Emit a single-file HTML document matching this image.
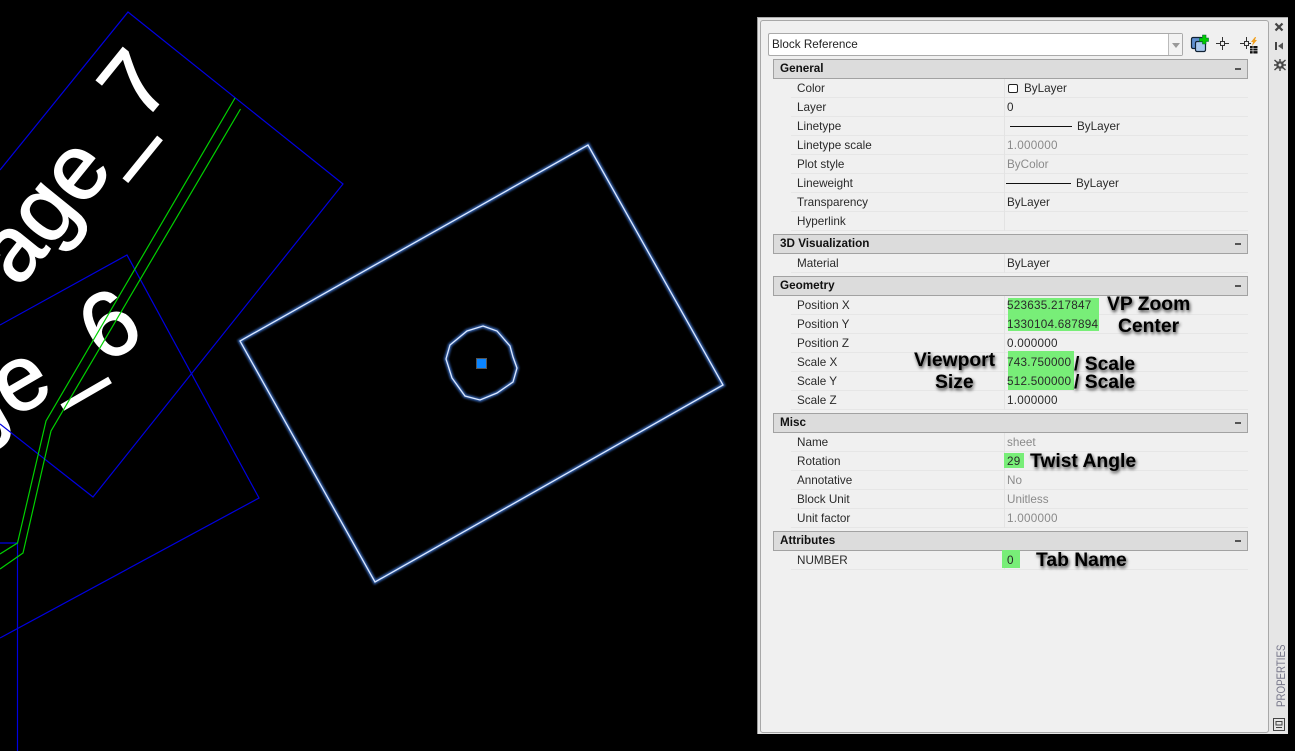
<!DOCTYPE html>
<html><head><meta charset="utf-8">
<style>
html,body{margin:0;padding:0;background:#000;width:1295px;height:751px;overflow:hidden}
body{position:relative;font-family:"Liberation Sans",sans-serif}
svg.d{position:absolute;left:0;top:0}
#p{position:absolute;left:757px;top:17px;width:531px;height:717px;background:#e6e6e6;border-top:1px solid #aaa;border-left:1px solid #999;box-sizing:border-box}
#i{position:absolute;left:760px;top:20px;width:509px;height:713px;background:#f0f0f0;border:1px solid #a8a8a8;border-radius:3px;box-sizing:border-box}
#c{position:absolute;left:768px;top:33px;width:415px;height:23px;background:#fff;border:1px solid #aaa;border-radius:2px;box-sizing:border-box;font-size:11.7px;line-height:21px;padding-left:3px;color:#222}
#c b{position:absolute;right:0;top:0;width:13px;height:21px;border-left:1px solid #bbb;background:#f2f2f2}
#c b:after{content:"";position:absolute;left:3px;top:9px;border:4px solid transparent;border-top:5px solid #999}
.h{position:absolute;left:773px;width:475px;height:20px;background:#dcdcdc;border:1px solid #a2a2a2;box-sizing:border-box;font-size:11.7px;font-weight:bold;line-height:18px;padding-left:6px;color:#111}
.h:after{content:"";position:absolute;right:6px;top:8px;width:6px;height:2px;background:#555}
.r{position:absolute;left:791px;width:457px;height:19px;border-bottom:1px solid #e6e6e6;box-sizing:border-box;font-size:11.7px;line-height:20px;color:#2a2a2a}
.r i{font-style:normal;position:absolute;left:6px;top:0}
.r u{text-decoration:none;position:absolute;left:216px;top:0;white-space:nowrap;z-index:2}
.r u.n{letter-spacing:.25px}
.r:before{content:"";position:absolute;left:213px;top:0;width:1px;height:19px;background:#e3e3e3}
.g{color:#8a8a8a}
.m{position:absolute;background:#78ee78;z-index:1}
.a{position:absolute;font-size:19.3px;font-weight:bold;color:#000;text-shadow:1px 2px 3px rgba(0,0,0,.75);white-space:nowrap;line-height:22px;text-align:center;z-index:3}
.v{position:absolute;left:1274px;top:707px;font-size:12px;color:#77778a;transform-origin:0 0;transform:rotate(-90deg) scaleX(.81);white-space:nowrap}
</style></head><body>
<svg class="d" width="757" height="751" viewBox="0 0 757 751" fill="none">
<defs><filter id="b" x="-10%" y="-10%" width="120%" height="120%"><feGaussianBlur stdDeviation="1.100"/></filter></defs>
<g font-family="Liberation Sans" font-size="92" fill="#fff" stroke="#fff" stroke-width="1.500" text-anchor="end">
<text x="124" y="84" transform="translate(4 6) rotate(-51 175 84)">Page_</text>
<text x="175" y="84" transform="rotate(-51 175 84)">7</text>
<text x="96" y="339" transform="translate(-2 3) rotate(-30 147 339)">Page_</text>
<text x="147" y="339" transform="rotate(-30 147 339)">6</text>
</g>
<g stroke="#0000e0" stroke-width="1.2">
<path d="M0 170L128 12L343 184L93 497L0 424"/>
<path d="M0 325L127 255L259 498L0 638"/>
<path d="M0 543H17.500V751"/>
</g>
<g stroke="#00d000" stroke-width="1.2">
<path d="M235 98L46 421L17.500 543L0 554"/>
<path d="M240.500 109L51 431L23 553L0 569"/>
</g>
<g stroke="#3d74d0" stroke-width="4" filter="url(#b)" opacity=".85">
<path d="M588 145L723 385L375 582L240 341Z"/>
<path d="M483 326L497 331L510 346L513 357L517 368L513 382L497 393L480 400L465 396L452 378L446 359L450 345L467 331Z"/>
</g>
<g stroke="#dbe8ff" stroke-width="1.300">
<path d="M588 145L723 385L375 582L240 341Z"/>
<path d="M483 326L497 331L510 346L513 357L517 368L513 382L497 393L480 400L465 396L452 378L446 359L450 345L467 331Z"/>
</g>
<rect x="476.500" y="358.500" width="10" height="10" fill="#0a84ff" stroke="#555"/>
</svg>
<div id="p"></div>
<div id="i"></div>
<div id="c">Block Reference<b></b></div>

<svg class="d" width="1295" height="751" viewBox="0 0 1295 751" fill="none" style="pointer-events:none">
<rect x="1191.500" y="37.500" width="11" height="11" rx="1.500" fill="#5f8fd0" stroke="#123" stroke-width="1.200"/>
<rect x="1195.500" y="41.500" width="10" height="10" rx="1.500" fill="#a8c8ee" stroke="#123" stroke-width="1.200"/>
<path d="M1199.500 38H1202.500V35H1206V38H1208.500V41.500H1206V44H1202.500V41.500H1199.500Z" fill="#0c0" stroke="#063" stroke-width=".6"/>
<path d="M1216 43.500H1220M1225 43.500H1229M1222.500 37V41M1222.500 46V50" stroke="#333"/>
<rect x="1220.500" y="41.500" width="4" height="4" stroke="#333"/>
<path d="M1240 43.500H1244M1249 43.500H1251M1246.500 37V41M1246.500 46V49" stroke="#333"/>
<rect x="1244.500" y="41.500" width="4" height="4" stroke="#333"/>
<path d="M1255 37L1251 42H1253L1252 46L1257 40H1255L1256 37Z" fill="#f0a020"/>
<rect x="1250" y="46" width="7.500" height="7.500" fill="#111"/>
<path d="M1250 48.500H1257.500M1250 50.800H1257.500M1253 46V53.500" stroke="#fff" stroke-width=".6"/>
<path d="M1275.500 23.500L1282.500 30.500M1282.500 23.500L1275.500 30.500" stroke="#444" stroke-width="2.200"/>
<path d="M1276 42V50" stroke="#444" stroke-width="2"/>
<path d="M1278 46L1283 42.500V49.500Z" fill="#555"/>
<rect x="1276.500" y="61.500" width="7" height="7" fill="#555"/>
<path d="M1274.500 60L1285.500 70M1285.500 60L1274.500 70M1280 59V71M1274 65H1286" stroke="#444" stroke-width="1.400"/>
<circle cx="1280" cy="65" r="1.500" fill="#e6e6e6"/>
<rect x="1273.500" y="718.500" width="11" height="12" fill="#e6e6e6" stroke="#444"/>
<path d="M1276 721.500H1282V725H1276ZM1276 727.500H1282" stroke="#444"/>
</svg>

<div class="h" style="top:59px">General</div>
<div class="r" style="top:79px"><i>Color</i><u style="left:233px">ByLayer</u></div>
<div style="position:absolute;left:1008px;top:84px;width:10px;height:9px;border:1px solid #222;border-radius:2px;box-sizing:border-box;background:#fff"></div>
<div class="r" style="top:98px"><i>Layer</i><u>0</u></div>
<div class="r" style="top:117px"><i>Linetype</i><u style="left:286px">ByLayer</u></div>
<div style="position:absolute;left:1010px;top:126px;width:62px;height:1px;background:#111"></div>
<div class="r g" style="top:136px"><i style="color:#2a2a2a">Linetype scale</i><u class="n">1.000000</u></div>
<div class="r g" style="top:155px"><i style="color:#2a2a2a">Plot style</i><u>ByColor</u></div>
<div class="r" style="top:174px"><i>Lineweight</i><u style="left:285px">ByLayer</u></div>
<div style="position:absolute;left:1006px;top:183px;width:65px;height:1px;background:#111"></div>
<div class="r" style="top:193px"><i>Transparency</i><u>ByLayer</u></div>
<div class="r" style="top:212px"><i>Hyperlink</i></div>

<div class="h" style="top:234px">3D Visualization</div>
<div class="r" style="top:254px"><i>Material</i><u>ByLayer</u></div>

<div class="h" style="top:276px">Geometry</div>
<div class="m" style="left:1008px;top:298px;width:91px;height:33px"></div>
<div class="m" style="left:1008px;top:351px;width:66px;height:39px"></div>
<div class="m" style="left:1004px;top:453px;width:20px;height:15px"></div>
<div class="m" style="left:1002px;top:550px;width:18px;height:18px"></div>
<div class="r" style="top:296px"><i>Position X</i><u class="n">523635.217847</u></div>
<div class="r" style="top:315px"><i>Position Y</i><u class="n">1330104.687894</u></div>
<div class="r" style="top:334px"><i>Position Z</i><u class="n">0.000000</u></div>
<div class="r" style="top:353px"><i>Scale X</i><u class="n">743.750000</u></div>
<div class="r" style="top:372px"><i>Scale Y</i><u class="n">512.500000</u></div>
<div class="r" style="top:391px"><i>Scale Z</i><u class="n">1.000000</u></div>

<div class="h" style="top:413px">Misc</div>
<div class="r g" style="top:433px"><i style="color:#2a2a2a">Name</i><u>sheet</u></div>
<div class="r" style="top:452px"><i>Rotation</i><u class="n">29</u></div>
<div class="r g" style="top:471px"><i style="color:#2a2a2a">Annotative</i><u>No</u></div>
<div class="r g" style="top:490px"><i style="color:#2a2a2a">Block Unit</i><u>Unitless</u></div>
<div class="r g" style="top:509px"><i style="color:#2a2a2a">Unit factor</i><u class="n">1.000000</u></div>

<div class="h" style="top:531px">Attributes</div>
<div class="r" style="top:551px"><i>NUMBER</i><u>0</u></div>

<div class="a" style="left:1107px;top:294px">VP Zoom</div>
<div class="a" style="left:1118px;top:316px">Center</div>
<div class="a" style="left:914px;top:350px">Viewport</div>
<div class="a" style="left:935px;top:372px">Size</div>
<div class="a" style="left:1074px;top:354px">/ Scale</div>
<div class="a" style="left:1074px;top:372px">/ Scale</div>
<div class="a" style="left:1030px;top:451px">Twist Angle</div>
<div class="a" style="left:1036px;top:550px">Tab Name</div>
<div class="v">PROPERTIES</div>
</body></html>
